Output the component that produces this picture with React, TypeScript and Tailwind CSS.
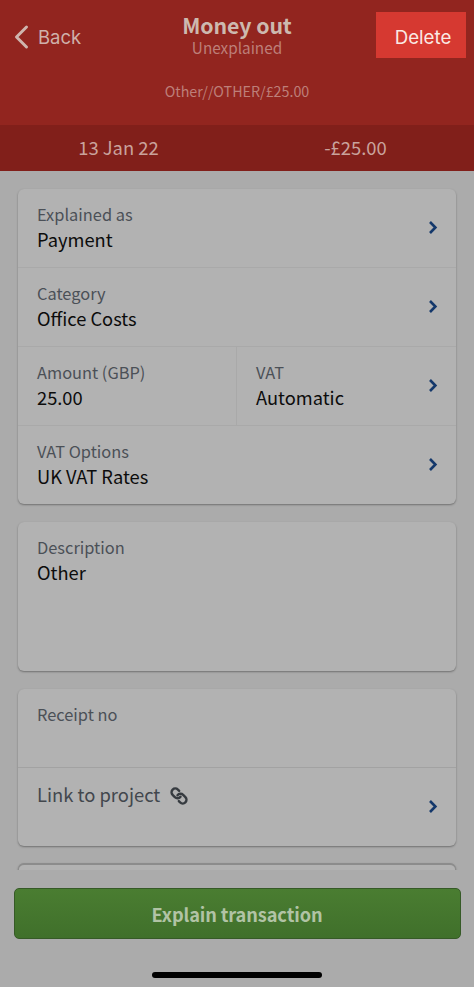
import type { ReactNode } from 'react';
import { Link } from 'lucide-react';

function Chevron() {
  return (
    <svg className="mr-[18px] shrink-0" width="10" height="15" viewBox="0 0 10 15" fill="none">
      <path d="M2 1 7.400 6.500 2 12" stroke="#14386b" strokeWidth="2.600" />
    </svg>
  );
}

function Field({ label, value, className = '', arrow = false }: { label: string; value?: string; className?: string; arrow?: boolean }) {
  return (
    <div className={`flex items-center justify-between ${className}`}>
      <div className="self-start pl-[19px] pt-[13px]">
        <p className="text-[16.4px] leading-6 text-[#4b5057]">{label}</p>
        {value && <p className="text-[18.3px] leading-[27px] text-[#0c0c0c]">{value}</p>}
      </div>
      {arrow && <Chevron />}
    </div>
  );
}

function Card({ children, className = '' }: { children?: ReactNode; className?: string }) {
  return (
    <section className={`mx-[18px] rounded-md bg-[#b2b2b2] shadow-[0_1px_2px_rgba(0,0,0,0.35)] ${className}`}>
      {children}
    </section>
  );
}

export default function App() {
  return (
    <div className="flex h-[987px] w-[474px] flex-col overflow-hidden bg-[#ababab] font-['Noto_Sans_CJK_SC',sans-serif]">
      {/* Header */}
      <header className="h-[125px] bg-[#92251f]">
        <div className="flex h-[74px] justify-between">
          <div className="flex w-[98px] items-center pl-[13px] font-['Inter',sans-serif]">
            <svg width="17" height="26" viewBox="0 0 17 26" fill="none">
              <path d="M13.500 3 3.500 13l10 10" stroke="#cfb5ae" strokeWidth="3" strokeLinecap="round" strokeLinejoin="round" />
            </svg>
            <span className="ml-2 pt-0.5 text-[18.500px] text-[#cfb0aa]">Back</span>
          </div>
          <div className="pt-[11px] text-center">
            <h1 className="text-[21.3px] font-bold leading-[27px] tracking-[-0.1px] text-[#cdb9af]">Money out</h1>
            <p className="text-[15.3px] leading-[19px] text-[#bd7f79]">Unexplained</p>
          </div>
          <button className="mr-2 mt-3 h-[46px] w-[90px] bg-[#d63931] pl-1 pt-1.5 font-['Inter',sans-serif] text-[18.7px] text-[#fae9e4]">
            Delete
          </button>
        </div>
        <p className="pt-[5px] text-center text-[14.3px] leading-6 text-[#bd7f79]">Other//OTHER/£25.00</p>
      </header>
      <div className="grid h-[46px] grid-cols-2 bg-[#811f1a] text-center text-[18.4px] leading-[45px] text-[#c9a29c]">
        <span>13 Jan 22</span>
        <span>-£25.00</span>
      </div>

      {/* Transaction form */}
      <main className="h-[699px] overflow-hidden pt-[18px]">
        <Card className="h-[315px]">
          <Field label="Explained as" value="Payment" arrow className="h-[79px] border-b border-[#a9a9a9]" />
          <Field label="Category" value="Office Costs" arrow className="h-[79px] border-b border-[#a9a9a9]" />
          <div className="flex border-b border-[#a9a9a9]">
            <Field label="Amount (GBP)" value="25.00" className="h-[78px] w-[219px] border-r border-[#a9a9a9]" />
            <Field label="VAT" value="Automatic" arrow className="h-[78px] flex-1" />
          </div>
          <Field label="VAT Options" value="UK VAT Rates" arrow className="h-[78px]" />
        </Card>
        <Card className="mt-[18px] h-[149px]">
          <Field label="Description" value="Other" />
        </Card>
        <Card className="mt-[18px] h-[157px]">
          <Field label="Receipt no" className="h-[79px] border-b border-[#a2a2a2]" />
          <div className="flex h-[78px] items-center justify-between">
            <div className="flex self-start pl-[19px] pt-[14px] text-[18.4px] leading-[25px] text-[#42474d]">
              Link to project
              <Link className="ml-[10px] mt-[5px] -scale-x-100 text-[#363b40]" size={18} strokeWidth={3.2} />
            </div>
            <Chevron />
          </div>
        </Card>
        <Card className="mt-[17px] h-20 border border-t-2 border-[#8c8c8c]" />
      </main>

      {/* Bottom action */}
      <footer className="flex flex-1 flex-col items-center pt-[18px]">
        <button className="h-[51px] w-[447px] rounded-[5px] border border-[#365a27] bg-linear-to-b from-[#4a7d31] to-[#40702b] pt-0.5 text-[18.200px] font-bold tracking-[-0.1px] text-[#b1c3a5]">
          Explain transaction
        </button>
        <div className="mt-[33px] h-1.5 w-[170px] rounded-full bg-black" />
      </footer>
    </div>
  );
}
